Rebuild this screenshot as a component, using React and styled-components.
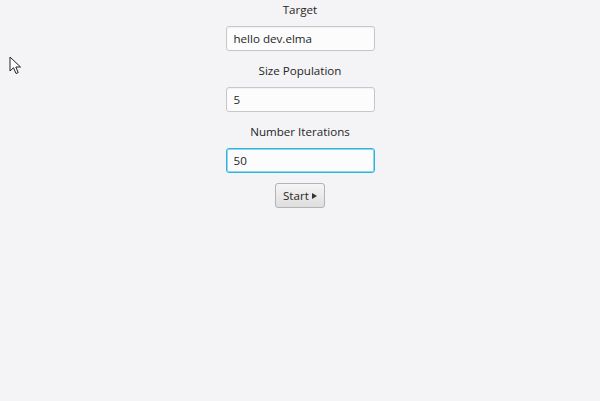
import React from "react";
import styled, { createGlobalStyle } from "styled-components";

const GlobalStyle = createGlobalStyle`
  html, body {
    margin: 0;
    padding: 0;
    background: #f4f3f5;
  }
  body {
    font-family: "Open Sans", "Noto Sans", "DejaVu Sans", sans-serif;
  }
`;

const Page = styled.div`
  position: relative;
  width: 600px;
  height: 401px;
  background: #f4f3f5;
  overflow: hidden;
`;

const Form = styled.div`
  display: flex;
  flex-direction: column;
  align-items: center;
  padding-top: 1px;
`;

const Group = styled.div`
  display: flex;
  flex-direction: column;
  align-items: center;
  gap: 8px;
  margin-bottom: ${(p) => (p.last ? "10px" : "11px")};
`;

const Label = styled.div`
  font-size: 11.6px;
  line-height: 17px;
  color: #262626;
`;

const Field = styled.input`
  box-sizing: border-box;
  width: 149px;
  height: 25px;
  padding: 0 7px;
  font-family: inherit;
  font-size: 11.6px;
  color: #262626;
  background: #fcfcfd;
  border: 1px solid ${(p) => (p.focused ? "#2db3dc" : "#c8c6ca")};
  box-shadow: ${(p) =>
    p.focused ? "inset 0 0 0 1px #8fd6ee" : "inset 0 1px 1px rgba(0,0,0,0.04)"};
  border-radius: 3px;
  outline: none;
`;

const Button = styled.button`
  display: flex;
  align-items: center;
  gap: 3px;
  box-sizing: border-box;
  width: 50px;
  height: 25px;
  padding: 0 0 0 7px;
  font-family: inherit;
  font-size: 11.6px;
  color: #262626;
  background: linear-gradient(#f5f5f5, #dedede);
  border: 1px solid #b3b3b3;
  border-radius: 3px;
`;

const Cursor = styled.svg`
  position: absolute;
  left: 9px;
  top: 56px;
`;

const fields = [
  { label: "Target", value: "hello dev.elma" },
  { label: "Size Population", value: "5" },
  { label: "Number Iterations", value: "50", focused: true },
];

const App = () => {
  return (
    <Page>
      <GlobalStyle />
      <Form>
        {fields.map((f, i) => (
          <Group key={f.label} last={i === fields.length - 1}>
            <Label>{f.label}</Label>
            <Field defaultValue={f.value} focused={f.focused} readOnly />
          </Group>
        ))}
        <Button>
          Start
          <svg width="5" height="6" viewBox="0 0 5 6">
            <path d="M0 0 L5 3 L0 6 Z" fill="#333" />
          </svg>
        </Button>
      </Form>
      <Cursor width="14" height="20" viewBox="0 0 14 20">
        <path
          d="M1 1 L1 15 L4.5 11.7 L7 17.5 L9.2 16.6 L6.8 11 L11.5 11 Z"
          fill="#fff"
          stroke="#222"
          strokeWidth="1"
          strokeLinejoin="round"
        />
      </Cursor>
    </Page>
  );
};

export default App;
